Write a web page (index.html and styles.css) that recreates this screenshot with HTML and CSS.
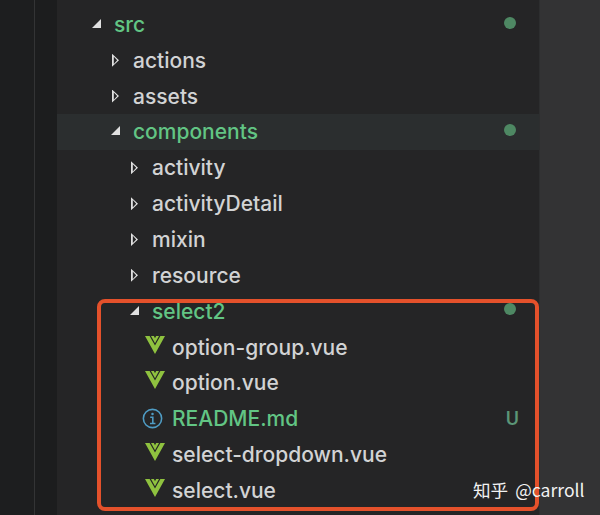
FILE: index.html
```html
<!DOCTYPE html>
<html lang="en">
<head>
<meta charset="utf-8">
<title>Explorer</title>
<link rel="stylesheet" href="styles.css">
</head>
<body>
<svg class="defs" width="0" height="0" aria-hidden="true">
  <symbol id="vue" viewBox="0 0 20 18">
    <path fill="#8fc23f" d="M0 0h4.600L10 9.600 15.400 0H20L10 18z"/>
    <path fill="#8fc23f" d="M6 0h2.900L10 2.300 11.100 0H14L10 7.200z"/>
  </symbol>
</svg>
<div class="app">
  <div class="rail"></div>
  <div class="gutter"></div>
  <main class="tree">
    <div class="row git d0"><span class="tw open"></span><span class="name">src</span><span class="dot"></span></div>
    <div class="row d1"><span class="tw closed"></span><span class="name">actions</span></div>
    <div class="row d1"><span class="tw closed"></span><span class="name">assets</span></div>
    <div class="row git d1 active"><span class="tw open"></span><span class="name">components</span><span class="dot"></span></div>
    <div class="row d2"><span class="tw closed"></span><span class="name">activity</span></div>
    <div class="row d2"><span class="tw closed"></span><span class="name">activityDetail</span></div>
    <div class="row d2"><span class="tw closed"></span><span class="name">mixin</span></div>
    <div class="row d2"><span class="tw closed"></span><span class="name">resource</span></div>
    <div class="row git d2"><span class="tw open"></span><span class="name">select2</span><span class="dot"></span></div>
    <div class="row file"><svg class="ico"><use href="#vue"/></svg><span class="name">option-group.vue</span></div>
    <div class="row file"><svg class="ico"><use href="#vue"/></svg><span class="name">option.vue</span></div>
    <div class="row file git"><svg class="ico info" viewBox="0 0 20 20"><circle cx="10" cy="10" r="8.700" fill="none" stroke="#4f9cc4" stroke-width="1.500"/><circle cx="10" cy="5.800" r="1.200" fill="#4f9cc4"/><path fill="none" stroke="#4f9cc4" stroke-width="1.500" d="M7.800 8.800H10.300V14.500M7.600 14.800H12.800"/></svg><span class="name">README.md</span><span class="badge">U</span></div>
    <div class="row file"><svg class="ico"><use href="#vue"/></svg><span class="name">select-dropdown.vue</span></div>
    <div class="row file"><svg class="ico"><use href="#vue"/></svg><span class="name">select.vue</span></div>
  </main>
  <aside class="side"></aside>
</div>
<div class="highlight"></div>
<div class="mark">知乎 @carroll</div>
</body>
</html>
```
FILE: styles.css
```css
html, body { margin: 0; padding: 0; }
body {
  width: 600px;
  height: 515px;
  overflow: hidden;
  position: relative;
  background: #252526;
  font-family: Inter, "Noto Sans", sans-serif;
}
.defs { position: absolute; }
.app { display: flex; height: 515px; }
.rail { width: 35px; background: #1d1e1f; border-right: 1px solid #333435; box-sizing: border-box; }
.gutter { width: 22px; background: #1c1d1e; }
.tree { width: 482px; padding-top: 6.500px; background: #252526; box-sizing: border-box; }
.side { flex: 1; background: #333334; border-left: 1px solid #2d2e2f; }
.row {
  display: flex;
  align-items: center;
  height: 35.850px;
  font-size: 21px;
  font-weight: 450;
  color: #d2d3d4;
  box-sizing: border-box;
  position: relative;
}
.d0 { padding-left: 35px; }
.d1 { padding-left: 54px; }
.d2 { padding-left: 73px; }
.file { padding-left: 88px; }
.active { background: #2b2e2f; }
.git .name { color: #62c584; }
.tw { width: 22px; flex: none; display: flex; align-items: center; }
.tw.open::before {
  content: "";
  width: 0;
  height: 0;
  margin-bottom: 2px;
  border-left: 9px solid transparent;
  border-bottom: 9px solid #e0e0e0;
}
.tw.closed::before {
  content: "";
  width: 7px;
  height: 13px;
  background: #e0e0e0;
  clip-path: polygon(0 0, 100% 50%, 0 100%, 0 0, 26% 22%, 26% 78%, 74% 50%, 26% 22%);
  margin-left: 1px;
}
.ico { width: 20px; height: 18px; flex: none; margin-right: 7px; margin-top: -5px; }
.info { margin-top: 0; width: 21px; height: 21px; margin-left: -3px; margin-right: 9px; }
.dot {
  position: absolute;
  right: 23px;
  top: 10px;
  width: 12px;
  height: 12px;
  border-radius: 50%;
  background: #4e8863;
}
.badge {
  position: absolute;
  right: 20px;
  font-size: 18px;
  font-weight: 600;
  color: #5b9677;
}
.highlight {
  position: absolute;
  left: 97px;
  top: 299px;
  width: 442px;
  height: 212px;
  box-sizing: border-box;
  border: 4px solid #e4512b;
  border-radius: 8px;
}
.mark {
  position: absolute;
  left: 473px;
  top: 479px;
  font-size: 17.600px;
  line-height: 22px;
  word-spacing: 3px;
  color: #f2f2f2;
  font-family: "Noto Sans CJK SC", "Noto Sans", sans-serif;
}
```
